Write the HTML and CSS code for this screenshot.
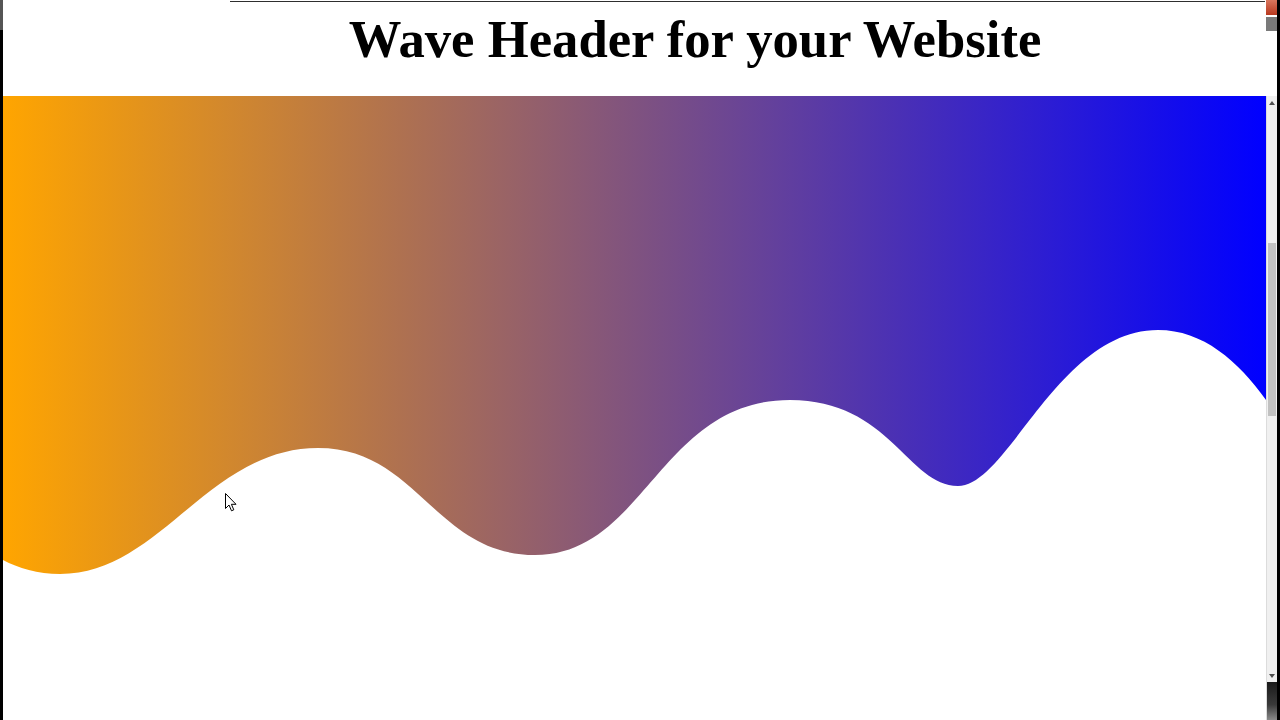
FILE: index.html
```html
<!DOCTYPE html>
<html lang="en">
<head>
<meta charset="utf-8">
<title>Wave Header for your Website</title>
<link rel="stylesheet" href="styles.css">
</head>
<body>
<div class="screen">
  <div class="edge-left"><div class="edge-left-top"></div></div>
  <main class="page">
    <header class="title-bar">
      <h1 class="title">Wave Header for your Website</h1>
    </header>
    <svg class="wave" viewBox="0 0 1263 480" preserveAspectRatio="none" aria-hidden="true">
      <defs>
        <linearGradient id="waveGrad" x1="0" y1="0" x2="1" y2="0">
          <stop offset="0" stop-color="#ffa500"/>
          <stop offset="1" stop-color="#0000ff"/>
        </linearGradient>
      </defs>
      <path fill="url(#waveGrad)" d="M0,0 L0,464 C15,472 35,478 57,478 C157,478 205,352 315,352 C415,352 432,459 532,459 C642,459 657,304 787,304 C887,304 905,390 955,390 C1005,390 1055,234 1155,234 C1200,234 1235,265 1263,304 L1263,0 Z"/>
    </svg>
    <svg class="cursor" viewBox="0 0 12 19" aria-hidden="true">
      <path d="M0.5,0.5 L0.5,15.5 L4,12 L6.5,17.8 L8.8,16.8 L6.4,11.3 L11,11.3 Z" fill="#fff" stroke="#000" stroke-width="1" stroke-linejoin="round"/>
    </svg>
  </main>
  <aside class="scrollbar">
    <div class="sb-top">
      <div class="sb-red"></div>
      <div class="sb-gray"></div>
    </div>
    <div class="sb-track">
      <div class="sb-arrow sb-up"></div>
      <div class="sb-space-a"></div>
      <div class="sb-thumb"></div>
      <div class="sb-space-b"></div>
      <div class="sb-arrow sb-down"></div>
      <div class="sb-bottom"></div>
    </div>
  </aside>
  <div class="edge-right"></div>
</div>
</body>
</html>
```

FILE: styles.css
```css
* { box-sizing: border-box; }

html, body {
  margin: 0;
  padding: 0;
  background: #ffffff;
  overflow: hidden;
}

.screen {
  display: flex;
  width: 1280px;
  height: 720px;
  background: #ffffff;
  border-top: 1px solid transparent;
  position: relative;
}

.screen::before {
  content: "";
  position: absolute;
  top: 0;
  left: 230px;
  width: 1035px;
  height: 1px;
  background: #2e2e2e;
}

.edge-left {
  width: 3px;
  flex: none;
  background: #000;
  margin-top: -1px;
}

.edge-left-top {
  width: 3px;
  height: 30px;
  background: #555;
}

.page {
  flex: 1;
  position: relative;
  margin-top: -1px;
}

.title-bar {
  height: 96px;
  padding: 9px 0 0 121px;
}

.title {
  margin: 0;
  text-align: center;
  font-family: "Liberation Serif", "Times New Roman", serif;
  font-weight: 700;
  font-size: 52.7px;
  line-height: 60px;
  color: #000;
}

.wave {
  display: block;
  width: 1263px;
  height: 480px;
}

.cursor {
  position: absolute;
  left: 222px;
  top: 493px;
  width: 12px;
  height: 19px;
}

.scrollbar {
  width: 11px;
  flex: none;
  display: flex;
  flex-direction: column;
  margin-top: -1px;
}

.sb-top {
  height: 96px;
  background: #fff;
  display: flex;
  flex-direction: column;
}

.sb-red {
  height: 15px;
  background: linear-gradient(#d9775e, #b8391f);
}

.sb-gray {
  height: 14px;
  margin-top: 2px;
  background: #7a7a7a;
}

.sb-track {
  flex: 1;
  display: flex;
  flex-direction: column;
  align-items: center;
  background: #f0f0f0;
  border-left: 1px solid #dcdcdc;
}

.sb-arrow {
  width: 0;
  height: 0;
  border-left: 3px solid transparent;
  border-right: 3px solid transparent;
}

.sb-up {
  margin-top: 5px;
  border-bottom: 4px solid #505050;
}

.sb-space-a {
  height: 138px;
}

.sb-thumb {
  width: 8px;
  height: 173px;
  background: #c1c1c1;
}

.sb-space-b {
  flex: 1;
}

.sb-down {
  border-top: 4px solid #505050;
  margin-bottom: 4px;
}

.sb-bottom {
  width: 100%;
  height: 38px;
  background: linear-gradient(#1a1a1a, #3a3a3a 60%, #8a8a8a);
}

.edge-right {
  width: 3px;
  flex: none;
  background: #000;
  margin-top: -1px;
}
```
